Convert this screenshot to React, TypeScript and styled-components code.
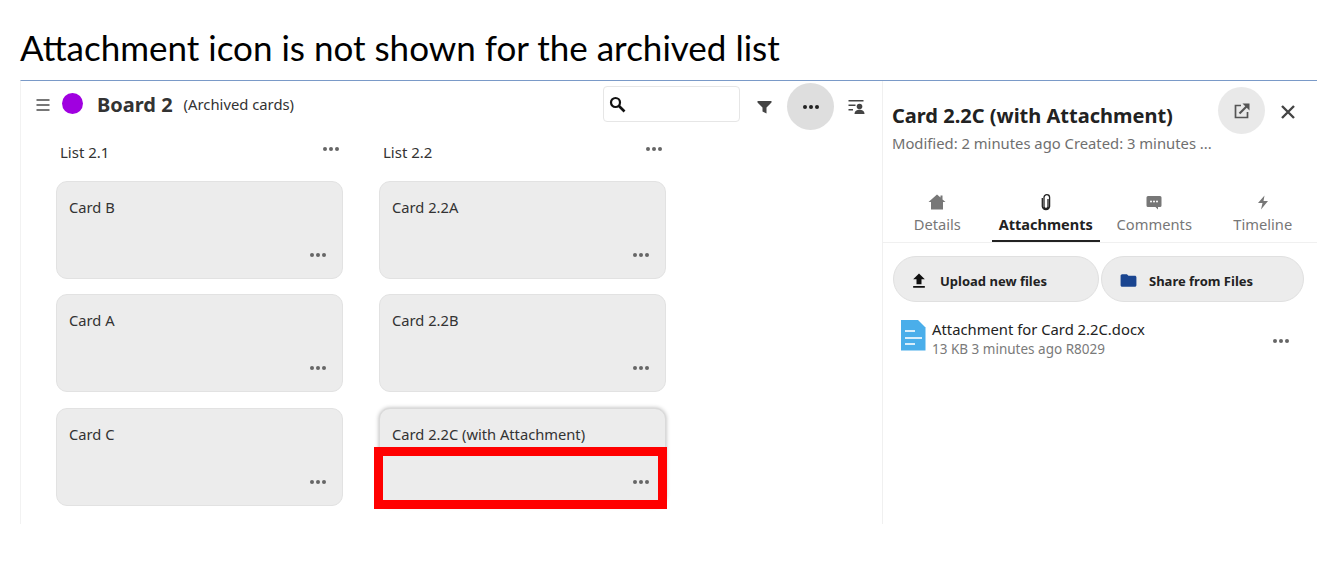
import styled, {createGlobalStyle} from "styled-components";
import {MdFileUpload, MdFolder} from "react-icons/md";

const GlobalStyle = createGlobalStyle`
  html, body {
    margin: 0;
    padding: 0;
    background: #fff;
  }

  body {
    font-family: "Noto Sans", "Open Sans", sans-serif;
    color: #222;
    font-size: 15px;
  }
`;

function MenuIcon() {
    return (
        <svg width="14" height="14" viewBox="0 0 14 14" fill="#777">
            <rect x="0.500" y="1" width="13" height="2"/>
            <rect x="0.500" y="6" width="13" height="2"/>
            <rect x="0.500" y="11" width="13" height="2"/>
        </svg>
    );
}

function SearchIcon() {
    return (
        <svg width="17" height="17" viewBox="0 0 17 17" fill="none" stroke="#111">
            <circle cx="6.500" cy="6.500" r="4.500" strokeWidth="2.200"/>
            <path d="M10 10L15.500 15.500" strokeWidth="2.600"/>
        </svg>
    );
}

function HomeIcon() {
    return (
        <svg width="18" height="16" viewBox="0 0 18 16" fill="currentColor">
            <path d="M9 0.500L12.500 3.600V1.500H14.500V5.400L17.500 8H15V15.500H3V8H0.500Z"/>
        </svg>
    );
}

function PaperclipIcon() {
    return (
        <svg width="10" height="17" viewBox="0 0 10 17" fill="none" stroke="currentColor" strokeWidth="1.300">
            <path d="M7 5V12.500A2 2 0 0 1 3 12.500V3.500A2.800 2.800 0 0 1 8.600 3.500V12.500A3.700 3.700 0 0 1 1.300 12.500V4"/>
        </svg>
    );
}

function CommentIcon() {
    return (
        <svg width="16" height="15" viewBox="0 0 16 15">
            <path d="M2 1H14A1.500 1.500 0 0 1 15.500 2.500V10.500A1.500 1.500 0 0 1 14 12H12V14.500L9.500 12H2A1.500 1.500 0 0 1 0.500 10.500V2.500A1.500 1.500 0 0 1 2 1Z" fill="currentColor"/>
            <circle cx="5" cy="6.500" r="1" fill="#fff"/>
            <circle cx="8" cy="6.500" r="1" fill="#fff"/>
            <circle cx="11" cy="6.500" r="1" fill="#fff"/>
        </svg>
    );
}

function FlashIcon() {
    return (
        <svg width="12" height="15" viewBox="0 0 12 15" fill="currentColor">
            <path d="M7.500 0.500L1 8H5.500L4 14.500L11 6H6.500Z"/>
        </svg>
    );
}

function FilterIcon() {
    return (
        <svg width="15" height="14" viewBox="0 0 15 14" fill="currentColor">
            <path d="M0.500 1H14.500V2.500L9.500 7.500V13.500L5.500 11.500V7.500L0.500 2.500Z"/>
        </svg>
    );
}

function FilterUserIcon() {
    return (
        <svg width="17" height="16" viewBox="0 0 17 16" fill="currentColor">
            <rect x="0.500" y="1" width="15" height="1.500"/>
            <rect x="0.500" y="5.500" width="7" height="1.500"/>
            <rect x="0.500" y="10" width="4.500" height="1.500"/>
            <circle cx="11.500" cy="7.500" r="2.800"/>
            <path d="M6.500 15C6.500 12 9 10.800 11.500 10.800S16.500 12 16.500 15Z"/>
        </svg>
    );
}

function OpenIcon() {
    return (
        <svg width="16" height="16" viewBox="0 0 16 16" fill="none" stroke="#555">
            <path d="M7 2.500H1.500V14.500H13.500V9" strokeWidth="1.700"/>
            <path d="M5.500 10.500L12.500 3.500" strokeWidth="2.200"/>
            <path d="M8.500 0.500H15.500V7.500Z" fill="#555" stroke="none"/>
        </svg>
    );
}

function CloseIcon() {
    return (
        <svg width="16" height="16" viewBox="0 0 16 16" fill="none" stroke="#444" strokeWidth="2.400">
            <path d="M2 2L14 14M14 2L2 14"/>
        </svg>
    );
}

function DocumentIcon() {
    return (
        <svg width="26" height="31" viewBox="0 0 26 31">
            <path d="M1 0H18L25.500 7.500V30.500H1Z" fill="#4aaeea"/>
            <rect x="5" y="10" width="10" height="2" fill="#d8eefb"/>
            <rect x="5" y="17" width="17" height="2" fill="#d8eefb"/>
            <rect x="5" y="23" width="10" height="2" fill="#d8eefb"/>
        </svg>
    );
}

const lists = [
    {name: 'List 2.1', cards: ['Card B', 'Card A', 'Card C']},
    {name: 'List 2.2', cards: ['Card 2.2A', 'Card 2.2B', 'Card 2.2C (with Attachment)']},
];

const tabs = [
    {label: 'Details', icon: <HomeIcon/>},
    {label: 'Attachments', icon: <PaperclipIcon/>, active: true},
    {label: 'Comments', icon: <CommentIcon/>},
    {label: 'Timeline', icon: <FlashIcon/>},
];

export default function App() {
    return (
        <>
            <GlobalStyle/>
            <Page>
                <Heading>Attachment icon is not shown for the archived list</Heading>
                <Frame>
                    <Board>
                        <Toolbar>
                            <MenuButton><MenuIcon/></MenuButton>
                            <BoardDot/>
                            <BoardTitle>Board 2</BoardTitle>
                            <BoardNote>(Archived cards)</BoardNote>
                            <SearchBox><SearchIcon/></SearchBox>
                            <ToolIcon $left={17}><FilterIcon/></ToolIcon>
                            <RoundButton $bg="#dedede" $left={15}><Dots $color="#222"/></RoundButton>
                            <ToolIcon $left={14}><FilterUserIcon/></ToolIcon>
                        </Toolbar>
                        <Lists>
                            {lists.map((list) => (
                                <List key={list.name}>
                                    <ListHeader>
                                        <ListName>{list.name}</ListName>
                                        <Dots/>
                                    </ListHeader>
                                    {list.cards.map((card) => (
                                        <Card key={card} $raised={card.includes('Attachment')}>
                                            <CardTitle>{card}</CardTitle>
                                            <CardFooter><Dots/></CardFooter>
                                            {card.includes('Attachment') && <Highlight/>}
                                        </Card>
                                    ))}
                                </List>
                            ))}
                        </Lists>
                    </Board>
                    <Sidebar>
                        <SidebarHeader>
                            <SidebarHeading>
                                <SidebarTitle>Card 2.2C (with Attachment)</SidebarTitle>
                                <SidebarMeta>Modified: 2 minutes ago Created: 3 minutes ...</SidebarMeta>
                            </SidebarHeading>
                            <RoundButton $bg="#e9e9e9" $left={0}><OpenIcon/></RoundButton>
                            <CloseButton><CloseIcon/></CloseButton>
                        </SidebarHeader>
                        <Tabs>
                            {tabs.map((tab) => (
                                <Tab key={tab.label} $active={tab.active}>
                                    <TabIcon>{tab.icon}</TabIcon>
                                    <TabLabel $active={tab.active}>{tab.label}</TabLabel>
                                </Tab>
                            ))}
                        </Tabs>
                        <Actions>
                            <ActionButton $width={206} $pad={15}>
                                <MdFileUpload size={20} color="#111"/>
                                <span>Upload new files</span>
                            </ActionButton>
                            <ActionButton $width={203} $pad={17}>
                                <MdFolder size={19} color="#1a4590"/>
                                <span>Share from Files</span>
                            </ActionButton>
                        </Actions>
                        <FileRow>
                            <DocumentIcon/>
                            <FileInfo>
                                <FileName>Attachment for Card 2.2C.docx</FileName>
                                <FileMeta>13 KB 3 minutes ago R8029</FileMeta>
                            </FileInfo>
                            <Dots/>
                        </FileRow>
                    </Sidebar>
                </Frame>
            </Page>
        </>
    );
}

const Page = styled.div`
  padding: 0 5px 0 20px;
  height: 571px;
  box-sizing: border-box;
  overflow: hidden;
`;

const Heading = styled.h1`
  margin: 0;
  padding-top: 25px;
  height: 80px;
  box-sizing: border-box;
  font-family: Lato, "Open Sans", sans-serif;
  font-weight: 400;
  font-size: 35px;
  line-height: 44px;
  color: #000;
  white-space: nowrap;
`;

const Frame = styled.div`
  display: flex;
  height: 443px;
  border-top: 1px solid #7a9ac8;
  border-left: 1px solid #f2f2f2;
`;

const Board = styled.div`
  width: 861px;
  flex: none;
`;

const Toolbar = styled.div`
  display: flex;
  align-items: center;
  height: 47px;
  padding: 0 17px 0 15px;
  box-sizing: border-box;
`;

const MenuButton = styled.div`
  display: flex;
`;

const BoardDot = styled.div`
  width: 21px;
  height: 21px;
  margin: -2px 0 0 12px;
  border-radius: 50%;
  background: #a000e0;
`;

const BoardTitle = styled.div`
  margin-left: 14px;
  font-size: 20px;
  font-weight: 700;
  color: #333;
`;

const BoardNote = styled.div`
  margin: -2px 0 0 11px;
  font-size: 14.800px;
  color: #333;
`;

const SearchBox = styled.div`
  display: flex;
  align-items: center;
  width: 137px;
  height: 36px;
  margin: -1px 0 0 auto;
  padding-left: 5px;
  box-sizing: border-box;
  border: 1px solid #e6e6e6;
  border-radius: 4px;
`;

const ToolIcon = styled.div<{ $left: number }>`
  display: flex;
  margin: 4px 0 0 ${({$left}) => $left}px;
  color: #444;
`;

const RoundButton = styled.div<{ $bg: string; $left: number }>`
  display: flex;
  align-items: center;
  justify-content: center;
  flex: none;
  width: 47px;
  height: 47px;
  margin: 4px 0 0 ${({$left}) => $left}px;
  border-radius: 50%;
  background: ${({$bg}) => $bg};
`;

const DotsWrap = styled.div<{ $color?: string }>`
  display: flex;
  gap: 2px;
  flex: none;

  i {
    width: 4px;
    height: 4px;
    border-radius: 50%;
    background: ${({$color}) => $color || '#666'};
  }
`;

const Dots = ({$color}: { $color?: string }) => (
    <DotsWrap $color={$color}><i/><i/><i/></DotsWrap>
);

const Lists = styled.div`
  display: flex;
  gap: 36px;
  padding: 0 0 0 35px;
`;

const List = styled.div`
  width: 287px;
  display: flex;
  flex-direction: column;
  gap: 15.500px;
`;

const ListHeader = styled.div`
  display: flex;
  justify-content: space-between;
  height: 39px;
  margin-bottom: -1.600px;
  padding: 11px 4px 0 4px;
  box-sizing: border-box;

  ${DotsWrap} {
    margin-top: 8px;
  }
`;

const ListName = styled.div`
  font-size: 15px;
  line-height: 26px;
  color: #333;
`;

const Card = styled.div<{ $raised?: boolean }>`
  position: relative;
  display: flex;
  flex-direction: column;
  justify-content: space-between;
  height: 98px;
  padding: 15px 16px 21px 12px;
  box-sizing: border-box;
  border-radius: 11px;
  background: #ececec;
  border: 1px solid ${({$raised}) => $raised ? '#dadada' : '#e2e2e2'};
  box-shadow: ${({$raised}) => $raised ? '0 0 4px rgba(0, 0, 0, 0.3)' : 'none'};
`;

const CardTitle = styled.div`
  font-size: 14.700px;
  line-height: 20px;
  color: #333;
`;

const CardFooter = styled.div`
  display: flex;
  justify-content: flex-end;
`;

const Highlight = styled.div`
  position: absolute;
  left: -6px;
  right: -2px;
  top: 38px;
  height: 62px;
  box-sizing: border-box;
  border: 9px solid #ff0000;
`;

const Sidebar = styled.div`
  flex: 1;
  border-left: 1px solid #f0f0f0;
`;

const SidebarHeader = styled.div`
  display: flex;
  align-items: flex-start;
  height: 111px;
  padding: 2px 21px 0 9px;
  box-sizing: border-box;
`;

const SidebarHeading = styled.div`
  flex: 1;
  min-width: 0;
  padding-top: 19px;
`;

const SidebarTitle = styled.div`
  font-size: 20px;
  font-weight: 700;
  line-height: 28px;
  color: #222;
`;

const SidebarMeta = styled.div`
  font-size: 14.800px;
  line-height: 26px;
  color: #6f6f6f;
  white-space: nowrap;
`;

const CloseButton = styled.div`
  display: flex;
  margin: 21px 0 0 15px;
`;

const Tabs = styled.div`
  display: grid;
  grid-template-columns: repeat(4, 108.500px);
  height: 50px;
  border-bottom: 1px solid #f0f0f0;
`;

const Tab = styled.div<{ $active?: boolean }>`
  display: flex;
  flex-direction: column;
  align-items: center;
  height: 50px;
  box-sizing: border-box;
  color: ${({$active}) => $active ? '#222' : '#777'};
  border-bottom: 2px solid ${({$active}) => $active ? '#222' : 'transparent'};
`;

const TabIcon = styled.div`
  display: flex;
  align-items: center;
  height: 20px;
`;

const TabLabel = styled.div<{ $active?: boolean }>`
  font-size: ${({$active}) => $active ? 14.500 : 14.700}px;
  line-height: 24px;
  font-weight: ${({$active}) => $active ? 700 : 400};
`;

const Actions = styled.div`
  display: flex;
  gap: 2px;
  padding: 13px 0 0 10px;
`;

const ActionButton = styled.div<{ $width: number; $pad: number }>`
  display: flex;
  align-items: center;
  gap: 11px;
  width: ${({$width}) => $width}px;
  height: 46px;
  padding: 3px 0 0 ${({$pad}) => $pad}px;
  box-sizing: border-box;
  border: 1px solid #e0e0e0;
  border-radius: 23px;
  background: #ececec;
  font-size: 13px;
  font-weight: 700;
  color: #222;
`;

const FileRow = styled.div`
  display: flex;
  align-items: flex-start;
  gap: 6px;
  padding: 17px 28px 0 17px;

  svg {
    margin-top: 1px;
  }

  ${DotsWrap} {
    margin-top: 20px;
  }
`;

const FileInfo = styled.div`
  flex: 1;
`;

const FileName = styled.div`
  font-size: 14.800px;
  line-height: 20px;
  color: #222;
`;

const FileMeta = styled.div`
  font-size: 13.500px;
  line-height: 21px;
  color: #7a7a7a;
`;
